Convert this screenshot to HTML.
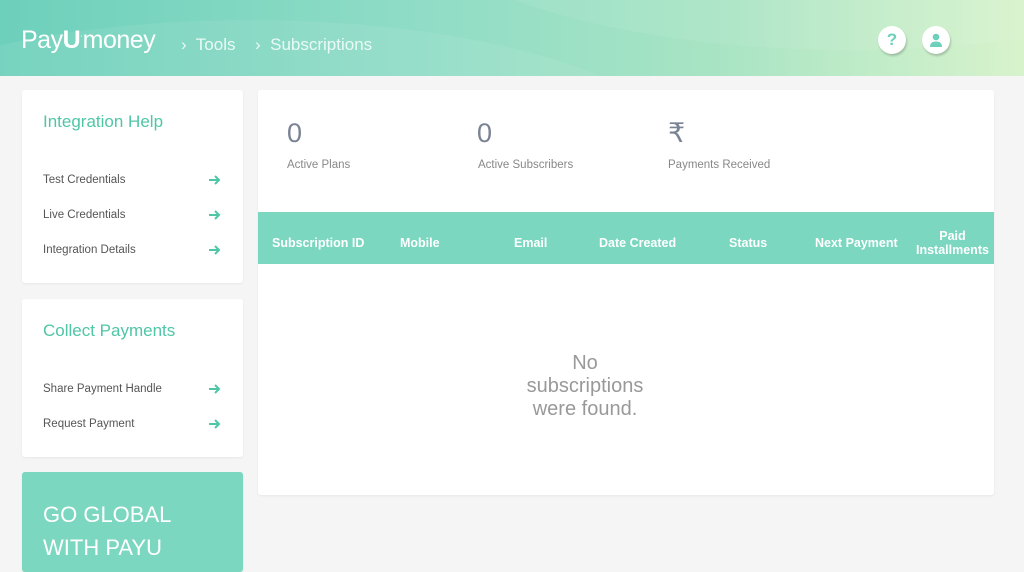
<!DOCTYPE html>
<html><head><style>
*{margin:0;padding:0;box-sizing:border-box}
body{width:1024px;height:560px;overflow:hidden;background:#f5f5f5;font-family:"Liberation Sans",sans-serif;position:relative}
.hdr{position:absolute;left:0;top:0;width:1024px;height:76px;background:linear-gradient(90deg,#6dd0bb 0%,#8fdcc6 40%,#a8e4c4 70%,#d8f3cc 100%);overflow:hidden}
.hdr .w{position:absolute;border-radius:50%;background:rgba(255,255,255,.07)}
.logo{position:absolute;left:21px;top:26px;color:#fff;font-size:25px;letter-spacing:-.5px}
.crumb{position:absolute;top:35px;color:#eafaf5;font-size:17px}
.ic{position:absolute;top:26px;width:28px;height:28px;border-radius:50%;background:#fff;box-shadow:1px 2px 2px rgba(0,0,0,.2);color:#6dd0bb;text-align:center;font-weight:bold;font-size:17px;line-height:28px}
.card{position:absolute;background:#fff;border-radius:3px;box-shadow:0 1px 2px rgba(0,0,0,.06)}
.ct{position:absolute;left:21px;color:#4fc6a6;font-size:17px}
.li{position:absolute;left:21px;color:#555;font-size:11.5px}
.ar{position:absolute;left:186px}
.num{position:absolute;top:118px;font-size:27px;color:#7a8394}
.lab{position:absolute;top:159px;font-size:11.5px;color:#888}
.th{position:absolute;top:212px;left:258px;width:736px;height:52px;background:#7bd7c0}
.th span{position:absolute;top:24px;color:#fff;font-size:12.5px;font-weight:bold}
</style></head><body>
<div class="hdr">
<div class="w" style="left:-200px;top:20px;width:900px;height:300px"></div>
<div class="w" style="left:400px;top:-250px;width:900px;height:300px"></div>
<div class="logo">Pay<b>U</b><sup style="font-size:9px">·</sup>money</div>
<div class="crumb" style="left:181px">›&nbsp; Tools</div>
<div class="crumb" style="left:255px">›&nbsp; Subscriptions</div>
<div class="ic" style="left:878px">?</div>
<div class="ic" style="left:922px"><svg width="16" height="16" viewBox="0 0 16 16" style="margin-top:6px"><circle cx="8" cy="5" r="3.3" fill="#6dd0bb"/><path d="M2 15 Q2 9.5 8 9.5 Q14 9.5 14 15Z" fill="#6dd0bb"/></svg></div>
</div>
<svg width="0" height="0" style="position:absolute"><defs><g id="a"><path d="M1 6H11M7 2L11 6L7 10" stroke="#4fc6a6" stroke-width="2" fill="none"/></g></defs></svg>
<div class="card" style="left:22px;top:90px;width:221px;height:193px">
<div class="ct" style="top:22px">Integration Help</div>
<div class="li" style="top:84px">Test Credentials</div><svg class="ar" style="top:84px" width="13" height="12"><use href="#a"/></svg>
<div class="li" style="top:119px">Live Credentials</div><svg class="ar" style="top:119px" width="13" height="12"><use href="#a"/></svg>
<div class="li" style="top:154px">Integration Details</div><svg class="ar" style="top:154px" width="13" height="12"><use href="#a"/></svg>
</div>
<div class="card" style="left:22px;top:299px;width:221px;height:158px">
<div class="ct" style="top:22px">Collect Payments</div>
<div class="li" style="top:84px">Share Payment Handle</div><svg class="ar" style="top:84px" width="13" height="12"><use href="#a"/></svg>
<div class="li" style="top:119px">Request Payment</div><svg class="ar" style="top:119px" width="13" height="12"><use href="#a"/></svg>
</div>
<div class="card" style="left:22px;top:472px;width:221px;height:100px;background:#7bd7c0">
<div style="position:absolute;left:21px;top:26px;color:#fff;font-size:22px;line-height:33px">GO GLOBAL<br>WITH PAYU</div>
</div>
<div class="card" style="left:258px;top:90px;width:736px;height:405px"></div>
<div class="num" style="left:287px">0</div><div class="lab" style="left:287px">Active Plans</div>
<div class="num" style="left:477px">0</div><div class="lab" style="left:478px">Active Subscribers</div>
<div class="num" style="left:668px">₹</div><div class="lab" style="left:668px">Payments Received</div>
<div class="th">
<span style="left:14px">Subscription ID</span><span style="left:142px">Mobile</span><span style="left:256px">Email</span><span style="left:341px">Date Created</span><span style="left:471px">Status</span><span style="left:557px">Next Payment</span>
<span style="left:658px;top:17px;text-align:center;line-height:14px">Paid<br>Installments</span>
</div>
<div style="position:absolute;left:500px;top:352px;width:170px;text-align:center;color:#999;font-size:20px;line-height:23px">No<br>subscriptions<br>were found.</div>
</body></html>
